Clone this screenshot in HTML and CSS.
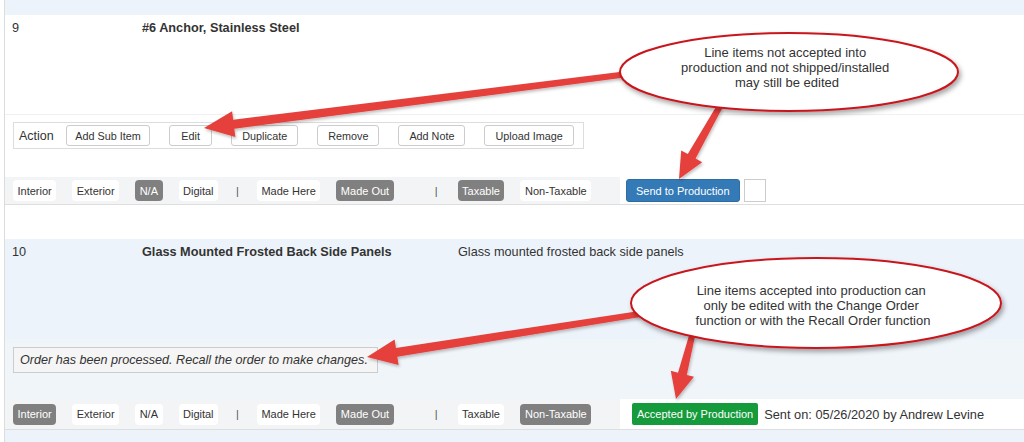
FILE: index.html
```html
<!DOCTYPE html>
<html lang="en">
<head>
<meta charset="utf-8">
<title>Line Items</title>
<link rel="stylesheet" href="styles.css">
</head>
<body>
<div class="page">
  <div class="content">
    <div class="topband"></div>

    <section class="item item-white">
      <div class="main-row">
        <span class="num">9</span>
        <span class="name">#6 Anchor, Stainless Steel</span>
        <span class="desc"></span>
      </div>
      <div class="action-area">
        <div class="action-box">
          <span class="action-label">Action</span>
          <button class="btn btn-first">Add Sub Item</button>
          <button class="btn btn-edit">Edit</button>
          <button class="btn">Duplicate</button>
          <button class="btn">Remove</button>
          <button class="btn">Add Note</button>
          <button class="btn">Upload Image</button>
        </div>
      </div>
      <div class="tag-row">
        <div class="strip">
          <span class="pill">Interior</span>
          <span class="pill">Exterior</span>
          <span class="pill on">N/A</span>
          <span class="pill">Digital</span>
          <span class="sep">|</span>
          <span class="pill">Made Here</span>
          <span class="pill on">Made Out</span>
          <span class="sep sep-wide">|</span>
          <span class="pill on">Taxable</span>
          <span class="pill">Non-Taxable</span>
        </div>
        <button class="send">Send to Production</button>
        <span class="checkbox"></span>
      </div>
    </section>

    <div class="spacer"></div>

    <section class="item item-blue">
      <div class="main-row">
        <span class="num">10</span>
        <span class="name">Glass Mounted Frosted Back Side Panels</span>
        <span class="desc">Glass mounted frosted back side panels</span>
      </div>
      <div class="notice-area">
        <div class="notice">Order has been processed. Recall the order to make changes.</div>
      </div>
      <div class="tag-row tag-row-tall">
        <div class="strip">
          <span class="pill on">Interior</span>
          <span class="pill">Exterior</span>
          <span class="pill">N/A</span>
          <span class="pill">Digital</span>
          <span class="sep">|</span>
          <span class="pill">Made Here</span>
          <span class="pill on">Made Out</span>
          <span class="sep sep-wide">|</span>
          <span class="pill">Taxable</span>
          <span class="pill on">Non-Taxable</span>
        </div>
        <span class="accepted">Accepted by Production</span>
        <span class="sent">Sent on: 05/26/2020 by Andrew Levine</span>
      </div>
      <div class="tail"></div>
    </section>
  </div>

  <svg class="annot" width="1024" height="442" viewBox="0 0 1024 442" xmlns="http://www.w3.org/2000/svg">
    <defs>
      <filter id="sh" x="-20%" y="-40%" width="140%" height="180%">
        <feDropShadow dx="2" dy="3" stdDeviation="2.5" flood-color="#000" flood-opacity="0.35"/>
      </filter>
      <filter id="ash" x="-10%" y="-40%" width="120%" height="180%">
        <feDropShadow dx="1" dy="2" stdDeviation="1.5" flood-color="#000" flood-opacity="0.25"/>
      </filter>
    </defs>
    <g class="arrow" filter="url(#ash)">
      <polygon points="628.4,77.0 234.3,128.7 235.4,137.1 204,128 232.1,111.3 233.2,119.8 627.6,71.0"/>
      <polygon points="722.6,107.5 695.6,158.5 702.2,162.2 679,179 681.2,150.4 687.8,154.1 717.4,104.5"/>
      <polygon points="640.5,317.0 397.3,356.7 398.6,365.1 367,357 394.6,339.5 395.9,347.9 639.5,311.0"/>
      <polygon points="694.9,336.7 686.8,374.9 694.0,376.8 676,399 670.8,370.8 678.0,372.7 689.1,335.3"/>
    </g>
    <ellipse class="bubble" cx="789" cy="72" rx="169" ry="39" filter="url(#sh)"/>
    <ellipse class="bubble" cx="816" cy="303" rx="185" ry="45" filter="url(#sh)"/>
    <text class="btext" text-anchor="middle">
      <tspan x="787" y="57">Line items not accepted into</tspan>
      <tspan x="787" y="72">production and not shipped/installed</tspan>
      <tspan x="787" y="87">may still be edited</tspan>
    </text>
    <text class="btext" text-anchor="middle">
      <tspan x="813" y="295">Line items accepted into production can</tspan>
      <tspan x="813" y="310">only be edited with the Change Order</tspan>
      <tspan x="813" y="325">function or with the Recall Order function</tspan>
    </text>
  </svg>
</div>
</body>
</html>
```

FILE: styles.css
```css
* { box-sizing: border-box; }

html, body {
  margin: 0;
  padding: 0;
  background: #ffffff;
}

body {
  font-family: "Liberation Sans", Arial, sans-serif;
  color: #333333;
}

.page {
  position: relative;
  width: 1024px;
  height: 442px;
  overflow: hidden;
}

.content {
  margin-left: 4px;
  border-left: 1px solid #dcdcdc;
  height: 442px;
}

.topband {
  height: 15px;
  background: #edf3fa;
}

.item-white { background: #ffffff; }
.item-blue { background: #edf3fa; }

.main-row {
  display: grid;
  grid-template-columns: 130px 316px 1fr;
  height: 100px;
  padding: 6px 0 0 7px;
  font-size: 12.7px;
  line-height: 15px;
}

.item-white .main-row { border-bottom: 1px solid #eef0f2; }

.name { font-weight: bold; font-size: 12.7px; }

.action-area {
  padding: 7px 0 28px 8px;
}

.action-box {
  display: inline-flex;
  align-items: center;
  gap: 19px;
  height: 27px;
  padding: 0 9px 0 5px;
  border: 1px solid #dddddd;
  background: #ffffff;
}

.action-label {
  font-size: 12.5px;
  color: #333;
  margin-right: -7px;
}

.btn {
  height: 21px;
  padding: 0 10px;
  font-family: "Liberation Sans", Arial, sans-serif;
  font-size: 10.8px;
  color: #333333;
  background: #ffffff;
  border: 1px solid #cccccc;
  border-radius: 3px;
}

.btn-first { padding: 0 8.5px; }
.btn-edit { min-width: 43px; }

.tag-row {
  display: flex;
  align-items: center;
  height: 28px;
  background: #ffffff;
  border-bottom: 1px solid #dedede;
}

.tag-row-tall { height: 31px; }

.strip {
  display: flex;
  align-items: center;
  gap: 16px;
  width: 615px;
  height: 100%;
  padding-left: 8px;
  background: #f3f4f6;
}

.pill {
  display: inline-flex;
  align-items: center;
  height: 21px;
  padding: 0 4.5px;
  font-size: 11px;
  color: #333333;
  background: #ffffff;
  border-radius: 4px;
}

.pill.on {
  background: #808080;
  color: #ffffff;
}

.sep {
  font-size: 11px;
  color: #555555;
  padding: 0 2px;
}

.sep-wide { margin-left: 23px; margin-right: 2px; }

.send {
  margin-left: 6px;
  height: 23px;
  padding: 0 9px;
  font-family: "Liberation Sans", Arial, sans-serif;
  font-size: 11px;
  color: #ffffff;
  background: #337ab7;
  border: 1px solid #2e6da4;
  border-radius: 3px;
}

.checkbox {
  width: 22px;
  height: 23px;
  margin-left: 4px;
  background: #ffffff;
  border: 1px solid #cccccc;
}

.spacer { height: 34px; background: #ffffff; }

.notice-area {
  padding: 8px 0 26px 8px;
  background: #f0f5fa;
}

.notice {
  display: inline-block;
  height: 26px;
  line-height: 24px;
  padding: 0 9px 0 6px;
  font-size: 12.6px;
  font-style: italic;
  color: #333333;
  background: #f5f5f5;
  border: 1px solid #cccccc;
}

.accepted {
  display: inline-flex;
  align-items: center;
  height: 22px;
  margin-left: 12px;
  padding: 0 5px;
  font-size: 11px;
  color: #ffffff;
  background: #159a3c;
  border-radius: 2px;
}

.sent {
  margin-left: 6px;
  font-size: 12.8px;
  color: #333333;
}

.tail { height: 20px; background: #edf3fa; }

.annot {
  position: absolute;
  left: 0;
  top: 0;
  pointer-events: none;
}

.arrow polygon { fill: #e5403b; }

.bubble {
  fill: #ffffff;
  stroke: #c8161d;
  stroke-width: 2;
}

.btext {
  font-family: "Liberation Sans", Arial, sans-serif;
  font-size: 13px;
  fill: #333333;
}
```
